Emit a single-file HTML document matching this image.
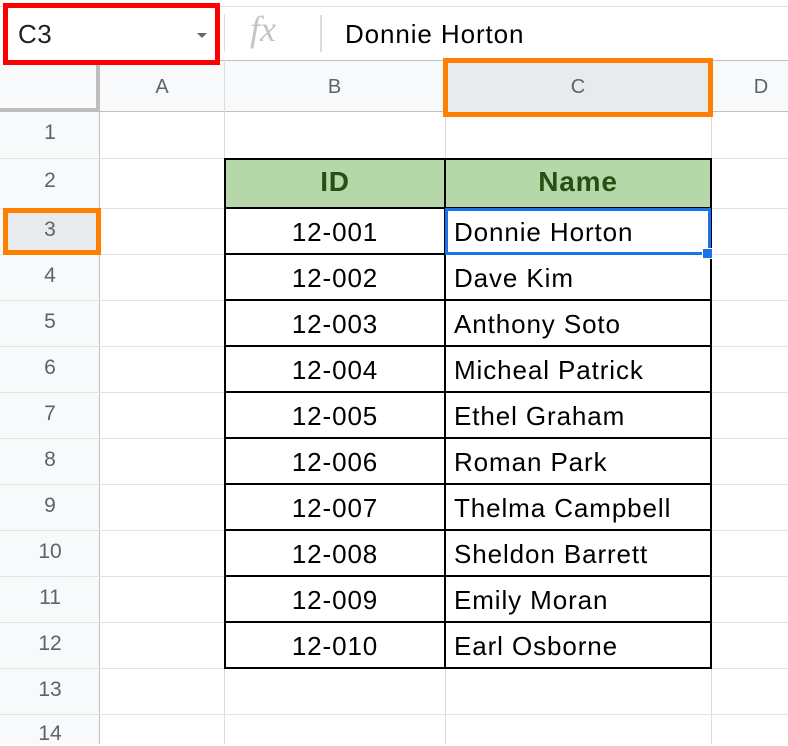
<!DOCTYPE html>
<html><head><style>
*{margin:0;padding:0;box-sizing:border-box}
body{width:788px;height:744px;overflow:hidden;background:#fff;font-family:"Liberation Sans",Arial,sans-serif;position:relative}
.a{position:absolute}
.hl{position:absolute;height:1px;background:#e2e3e3}
.vl{position:absolute;width:1px;background:#e2e3e3}
.rn{position:absolute;left:0;width:100px;text-align:center;color:#5f6368;font-size:21px}
.cn{position:absolute;top:62px;height:50px;line-height:50px;text-align:center;color:#5f6368;font-size:20px}
.id{position:absolute;left:225px;width:220px;text-align:center;font-size:26px;letter-spacing:0.9px;color:#000}
.nm{position:absolute;left:454px;font-size:26px;letter-spacing:0.9px;color:#000}
</style></head><body>
<!-- toolbar -->
<div class="a" style="left:0;top:6px;width:788px;height:1px;background:#e2e3e3"></div>
<div class="a" style="left:224px;top:14px;width:1px;height:38px;background:#dadce0"></div>
<div class="a" style="left:250px;top:8px;font-family:'Liberation Serif',serif;font-style:italic;font-size:36px;color:#c4c4c4">fx</div>
<div class="a" style="left:320px;top:15px;width:2px;height:37px;background:#dadce0"></div>
<div class="a" style="left:345px;top:19px;font-size:26px;letter-spacing:0.9px;color:#000">Donnie Horton</div>
<!-- header row -->
<div class="a" style="left:0;top:60px;width:788px;height:52px;background:#f8f9fa;border-top:1px solid #c0c0c0;border-bottom:1px solid #c0c0c0"></div>
<div class="a" style="left:0;top:60px;width:100px;height:684px;background:#f8f9fa;border-right:1px solid #c0c0c0"></div>
<div class="a" style="left:0;top:60px;width:100px;height:52px;background:#f8f9fa;border-right:4px solid #bdbdbd;border-bottom:4px solid #bdbdbd"></div>
<div class="vl" style="left:224px;top:60px;height:684px;background:#dadce0"></div>
<div class="vl" style="left:445px;top:60px;height:684px;background:#dadce0"></div>
<div class="vl" style="left:711px;top:60px;height:684px;background:#dadce0"></div>
<div class="cn" style="left:100px;width:124px">A</div>
<div class="cn" style="left:224px;width:221px">B</div>
<div class="a" style="left:443px;top:58px;width:270px;height:59px;border:5px solid #ff8000;background:#e8eaed"></div>
<div class="cn" style="left:445px;width:266px">C</div>
<div class="cn" style="left:711px;width:100px">D</div>
<!-- name box (on top) -->
<div class="a" style="left:3px;top:3px;width:217px;height:62px;border:5px solid #f00;background:#fff"></div>
<div class="a" style="left:18px;top:19px;font-size:26px;letter-spacing:0.5px;color:#202124">C3</div>
<div class="a" style="left:197px;top:33px;width:0;height:0;border-left:5px solid transparent;border-right:5px solid transparent;border-top:5px solid #666"></div>
<!-- row lines -->
<div class="hl" style="left:0;top:158px;width:788px"></div>
<div class="hl" style="left:0;top:208px;width:788px"></div>
<div class="hl" style="left:0;top:254px;width:788px"></div>
<div class="hl" style="left:0;top:300px;width:788px"></div>
<div class="hl" style="left:0;top:346px;width:788px"></div>
<div class="hl" style="left:0;top:392px;width:788px"></div>
<div class="hl" style="left:0;top:438px;width:788px"></div>
<div class="hl" style="left:0;top:484px;width:788px"></div>
<div class="hl" style="left:0;top:530px;width:788px"></div>
<div class="hl" style="left:0;top:576px;width:788px"></div>
<div class="hl" style="left:0;top:622px;width:788px"></div>
<div class="hl" style="left:0;top:668px;width:788px"></div>
<div class="hl" style="left:0;top:714px;width:788px"></div>
<!-- row numbers -->
<div class="rn" style="top:121px">1</div>
<div class="rn" style="top:169px">2</div>
<div class="a" style="left:3px;top:208px;width:98px;height:47px;border:5px solid #ff8000;background:#e8eaed"></div>
<div class="rn" style="top:218px">3</div>
<div class="rn" style="top:264px">4</div>
<div class="rn" style="top:310px">5</div>
<div class="rn" style="top:356px">6</div>
<div class="rn" style="top:402px">7</div>
<div class="rn" style="top:448px">8</div>
<div class="rn" style="top:494px">9</div>
<div class="rn" style="top:540px">10</div>
<div class="rn" style="top:586px">11</div>
<div class="rn" style="top:632px">12</div>
<div class="rn" style="top:678px">13</div>
<div class="rn" style="top:722px">14</div>
<!-- table -->
<div class="a" style="left:224px;top:158px;width:488px;height:50px;background:#b6d7a8"></div>
<div class="a" style="left:224px;top:158px;width:488px;height:511px;border:2px solid #000"></div>
<div class="a" style="left:444px;top:158px;width:2px;height:511px;background:#000"></div>
<div class="a" style="left:224px;top:207px;width:488px;height:2px;background:#000"></div>
<div class="a" style="left:224px;top:253px;width:488px;height:2px;background:#000"></div>
<div class="a" style="left:224px;top:299px;width:488px;height:2px;background:#000"></div>
<div class="a" style="left:224px;top:345px;width:488px;height:2px;background:#000"></div>
<div class="a" style="left:224px;top:391px;width:488px;height:2px;background:#000"></div>
<div class="a" style="left:224px;top:437px;width:488px;height:2px;background:#000"></div>
<div class="a" style="left:224px;top:483px;width:488px;height:2px;background:#000"></div>
<div class="a" style="left:224px;top:529px;width:488px;height:2px;background:#000"></div>
<div class="a" style="left:224px;top:575px;width:488px;height:2px;background:#000"></div>
<div class="a" style="left:224px;top:621px;width:488px;height:2px;background:#000"></div>
<div class="a" style="left:225px;top:166px;width:220px;text-align:center;font-size:28px;font-weight:bold;letter-spacing:0.8px;color:#274e13">ID</div>
<div class="a" style="left:445px;top:166px;width:266px;text-align:center;font-size:28px;font-weight:bold;letter-spacing:0.8px;color:#274e13">Name</div>
<div class="id" style="top:217px">12-001</div><div class="nm" style="top:217px">Donnie Horton</div>
<div class="id" style="top:263px">12-002</div><div class="nm" style="top:263px">Dave Kim</div>
<div class="id" style="top:309px">12-003</div><div class="nm" style="top:309px">Anthony Soto</div>
<div class="id" style="top:355px">12-004</div><div class="nm" style="top:355px">Micheal Patrick</div>
<div class="id" style="top:401px">12-005</div><div class="nm" style="top:401px">Ethel Graham</div>
<div class="id" style="top:447px">12-006</div><div class="nm" style="top:447px">Roman Park</div>
<div class="id" style="top:493px">12-007</div><div class="nm" style="top:493px">Thelma Campbell</div>
<div class="id" style="top:539px">12-008</div><div class="nm" style="top:539px">Sheldon Barrett</div>
<div class="id" style="top:585px">12-009</div><div class="nm" style="top:585px">Emily Moran</div>
<div class="id" style="top:631px">12-010</div><div class="nm" style="top:631px">Earl Osborne</div>
<!-- selection -->
<div class="a" style="left:445px;top:208px;width:266px;height:47px;border:3px solid #1a73e8"></div>
<div class="a" style="left:702px;top:248px;width:11px;height:11px;background:#1a73e8;border:1px solid #fff"></div>
</body></html>
